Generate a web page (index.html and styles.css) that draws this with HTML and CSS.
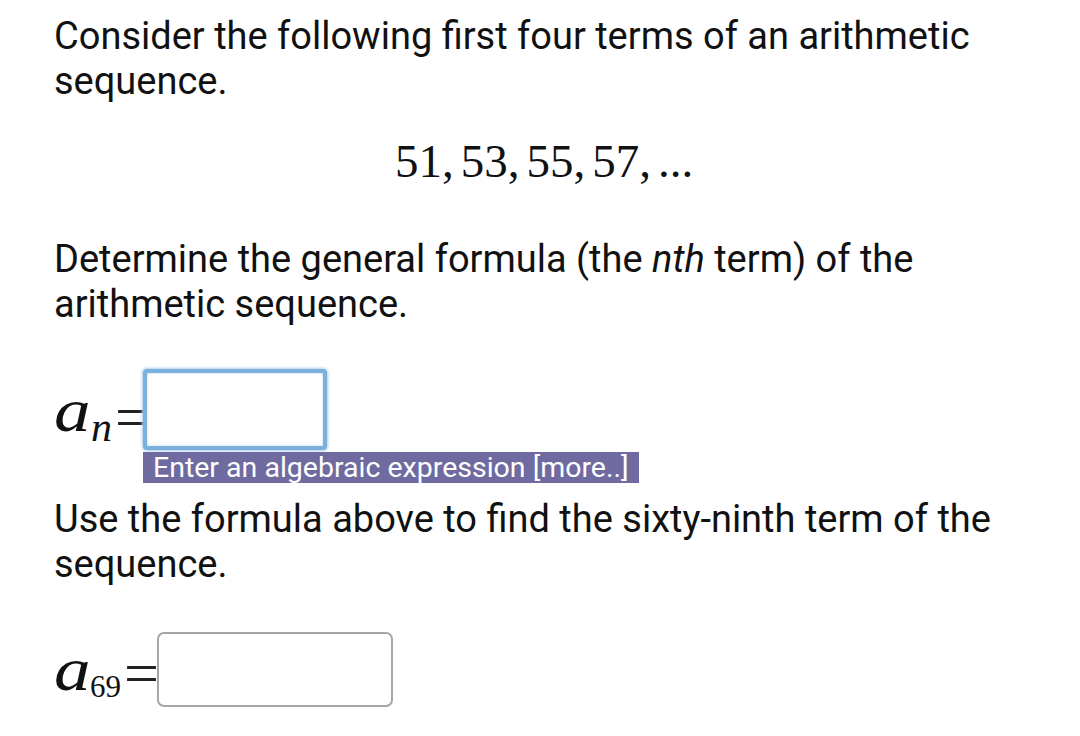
FILE: index.html
```html
<!DOCTYPE html>
<html>
<head>
<meta charset="utf-8">
<link rel="stylesheet" href="styles.css">
</head>
<body>
<div class="page">
  <p class="para p1">Consider the following first four terms of an arithmetic sequence.</p>
  <div class="display"><span class="num">51,</span><span class="num">53,</span><span class="num">55,</span><span class="num">57,</span><span class="num">...</span></div>
  <p class="para p2">Determine the general formula (the <em>nth</em> term) of the arithmetic sequence.</p>
  <div class="answer answer-n">
    <span class="lhs"><span class="var">a</span><span class="sub">n</span></span>
    <span class="eq">=</span>
    <div class="box box-focus"></div>
  </div>
  <div class="hint-row"><span class="hint">Enter an algebraic expression [more..]</span></div>
  <p class="para p3">Use the formula above to find the sixty-ninth term of the sequence.</p>
  <div class="answer answer-69">
    <span class="lhs"><span class="var">a</span><span class="sub sub-num">69</span></span>
    <span class="eq">=</span>
    <div class="box box-plain"></div>
  </div>
</div>
</body>
</html>
```

FILE: styles.css
```css
html, body {
  margin: 0;
  padding: 0;
  background: #ffffff;
}

.page {
  padding: 14px 20px 0 54px;
  font-family: Roboto, "Noto Sans", sans-serif;
  color: #111111;
}

.para {
  margin: 0;
  font-size: 38px;
  line-height: 45px;
  max-width: 1000px;
}

.para em {
  font-style: italic;
}

.display {
  display: flex;
  justify-content: center;
  gap: 7px;
  margin: 27px 0 0 -54px;
  padding-left: 28px;
  font-family: "Liberation Serif", "DejaVu Serif", serif;
  font-size: 47px;
  line-height: 60px;
  color: #111;
}

.p2 {
  margin-top: 46px;
}

.answer {
  display: flex;
  align-items: flex-end;
}

.answer-n {
  margin-top: 42px;
}

.lhs {
  display: flex;
  align-items: baseline;
  flex: none;
  font-family: "Liberation Serif", "DejaVu Serif", serif;
  font-style: italic;
  line-height: 1;
}

.var {
  display: inline-block;
  font-size: 62px;
  transform: scaleX(1.18);
  transform-origin: left center;
}

.sub {
  font-size: 42px;
  position: relative;
  top: 10px;
  margin-left: 6px;
}

.sub-num {
  font-style: normal;
  font-size: 31px;
  top: 7px;
  margin-left: 5px;
}

.answer-n .lhs {
  width: 61px;
  margin-bottom: 9px;
}

.answer-69 .lhs {
  width: 70px;
  margin-bottom: 7px;
}

.eq {
  flex: none;
  font-family: "Liberation Serif", "DejaVu Serif", serif;
  font-size: 62px;
  line-height: 1;
  color: #222;
}

.answer-n .eq {
  margin: 0 0 2px 0;
}

.answer-69 .eq {
  margin: 0 0 3px 0;
}

.box {
  background: #fff;
  box-sizing: border-box;
  flex: none;
}

.box-focus {
  width: 184px;
  height: 81px;
  margin-left: -7px;
  border: 4px solid #7cb0dc;
  border-radius: 4px;
  box-shadow: 0 0 3px 1px #a9cdee, inset 0 0 3px #b9d8f2;
}

.answer-69 {
  margin-top: 45px;
}

.box-plain {
  width: 236px;
  height: 75px;
  margin-left: -2px;
  border: 2px solid #a6a6a6;
  border-radius: 7px;
}

.hint-row {
  display: flex;
  margin-top: 2px;
  padding-left: 89px;
}

.hint {
  display: block;
  background: #6f6ba0;
  color: #ffffff;
  font-size: 28.5px;
  line-height: 31px;
  padding: 0 10px;
}

.p3 {
  margin-top: 14px;
}
```
